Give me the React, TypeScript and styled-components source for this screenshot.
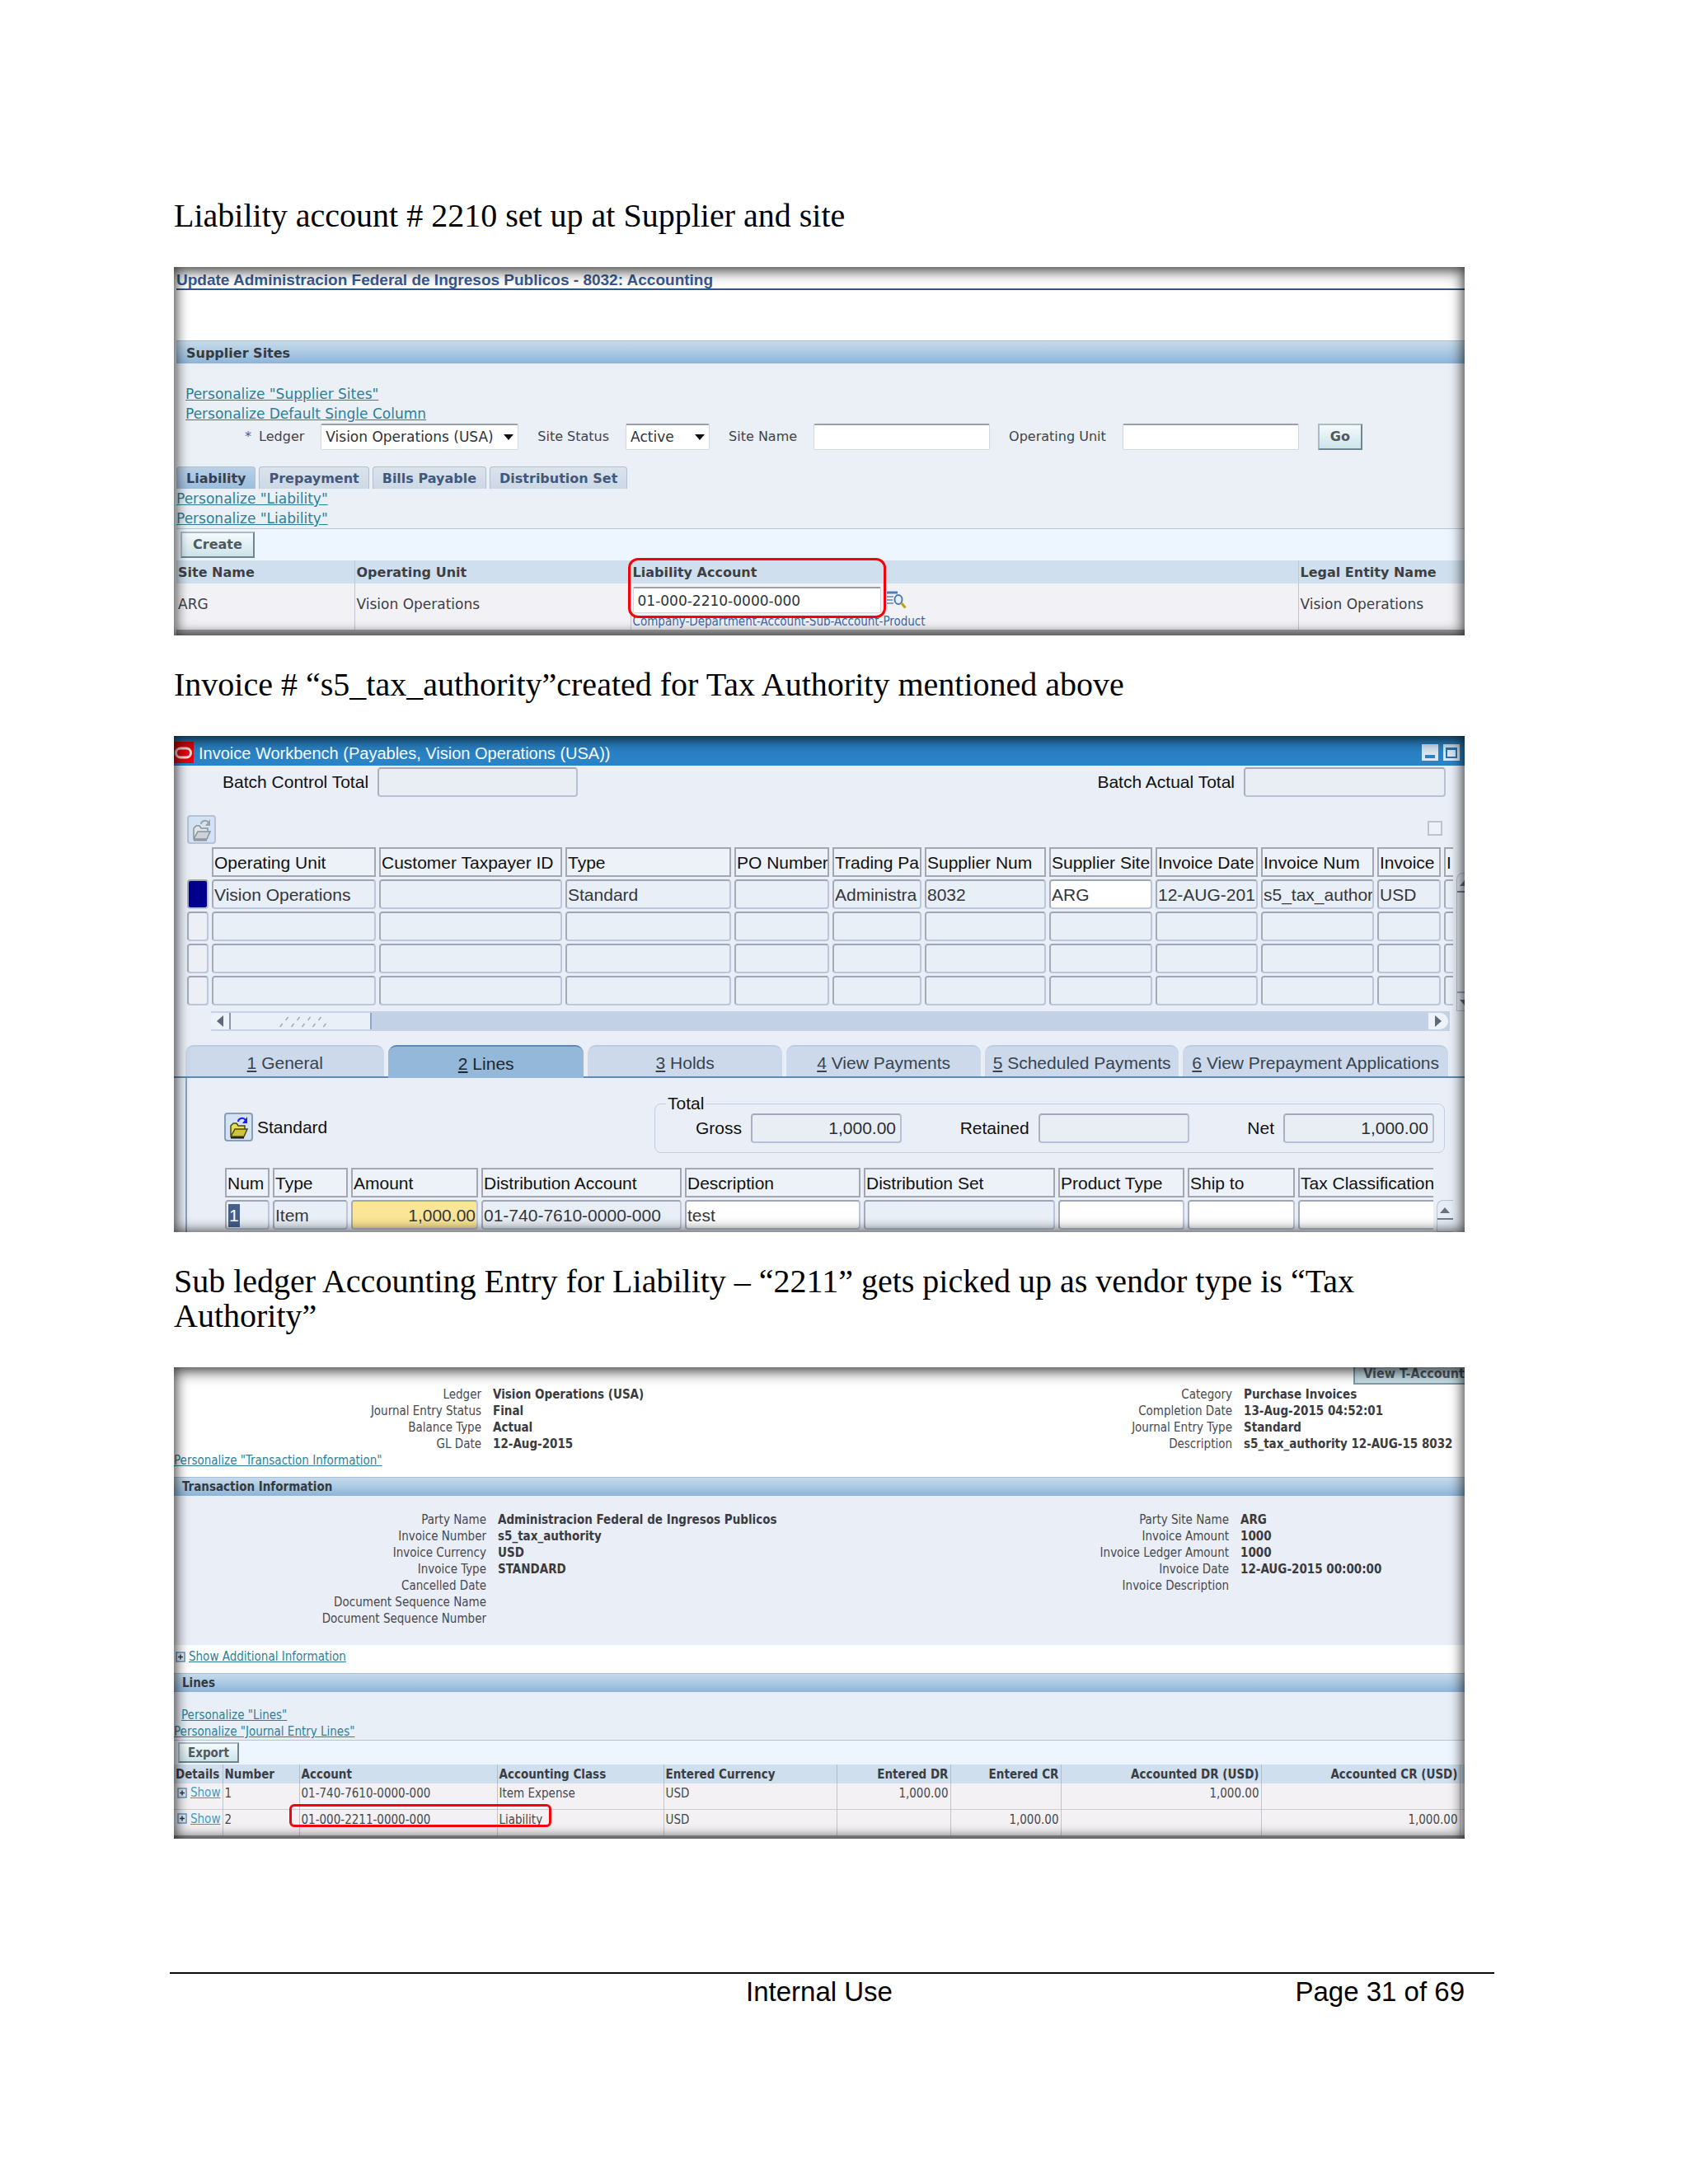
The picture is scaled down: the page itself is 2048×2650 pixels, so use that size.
import React from "react";
import styled, { createGlobalStyle, css } from "styled-components";

const GlobalStyle = createGlobalStyle`
  *, *::before, *::after { box-sizing: border-box; }
  body { margin: 0; background: #ffffff; }
`;

const tahoma = `"DejaVu Sans", Verdana, sans-serif`;
const tahomaNarrow = `"DejaVu Sans Condensed", Tahoma, "DejaVu Sans", sans-serif`;
const arial = `"Liberation Sans", Arial, sans-serif`;

/* ---------- document sheet ---------- */

const Sheet = styled.main`
  padding: 241px 271px 190px 211px;
`;

const Caption = styled.h2`
  margin: 0 0 41px;
  font: 400 40px/42px "Liberation Serif", Georgia, serif;
  color: #000;
`;

const Figure = styled.section<{ $indent?: number }>`
  position: relative;
  overflow: hidden;
  margin-bottom: 39px;
  padding-left: ${(p) => p.$indent ?? 0}px;
  background: #fff;
  &::after {
    content: "";
    position: absolute;
    inset: 0;
    z-index: 5;
    pointer-events: none;
    box-shadow: inset 0 5px 20px -2px rgba(0, 0, 0, 0.55), inset 0 0 16px 1px rgba(0, 0, 0, 0.6);
  }
`;

const FooterBar = styled.footer`
  display: grid;
  grid-template-columns: 1fr auto 1fr;
  margin: 162px -36px 0 -5px;
  padding: 3px 36px 0 5px;
  border-top: 2px solid #0a0a0a;
  font: 33px/38px ${arial};
  color: #000;
`;

const FooterMiddle = styled.span`
  grid-column: 2;
`;

const PageNumber = styled.span`
  text-align: right;
`;

/* ---------- shared web-page parts ---------- */

const SectionBar = styled.h3<{ $small?: boolean }>`
  margin: 0;
  border-top: 1px solid #a9bfd3;
  background: linear-gradient(#c6daeb, #abc9e2 50%, #8db4da);
  color: #333a42;
  ${(p) =>
    p.$small
      ? css`
          padding: 0 10px;
          font: 700 15px/22px ${tahomaNarrow};
        `
      : css`
          padding: 3px 12px 0;
          font: 700 16px/24px ${tahoma};
        `}
`;

const Link = styled.a<{ $small?: boolean }>`
  color: #2d7f97;
  text-decoration: underline;
  font: ${(p) => (p.$small ? `15px/20px ${tahomaNarrow}` : `17px/24px ${tahoma}`)};
`;

const LinkStack = styled.div<{ $left?: number }>`
  display: flex;
  flex-direction: column;
  align-items: flex-start;
  padding-left: ${(p) => p.$left ?? 0}px;
`;

const PushButton = styled.button<{ $small?: boolean }>`
  height: ${(p) => (p.$small ? 25 : 32)}px;
  padding: 0 ${(p) => (p.$small ? 10 : 13)}px;
  border: 2px solid;
  border-color: #a9bcc6 #6f858f #6f858f #a9bcc6;
  background: linear-gradient(#f4fafc, #cde4ea);
  color: #4f5961;
  font: ${(p) => (p.$small ? `700 15px/20px ${tahomaNarrow}` : `700 16px/24px ${tahoma}`)};
`;

const Toolbar = styled.div<{ $small?: boolean }>`
  display: flex;
  padding: ${(p) => (p.$small ? "2px 5px" : "3px 5px")};
  border-top: 1px solid #bac3d0;
  background: #edf5fe;
`;

const BottomEdge = styled.div<{ $h: number }>`
  height: ${(p) => p.$h}px;
  background: #a9a9ac;
`;

const Highlight = styled.span<{ $x: number; $y: number; $w: number; $h: number }>`
  position: absolute;
  z-index: 6;
  left: ${(p) => p.$x}px;
  top: ${(p) => p.$y}px;
  width: ${(p) => p.$w}px;
  height: ${(p) => p.$h}px;
  border: 3px solid #f3040c;
  border-radius: ${(p) => (p.$h > 40 ? 12 : 6)}px;
  pointer-events: none;
`;

const Col = styled.col<{ $w: number }>`
  width: ${(p) => p.$w}px;
`;

/* ---------- figure 1: supplier accounting ---------- */

const PageTitle = styled.h3`
  margin: 0 0 61px;
  padding-top: 6px;
  border-bottom: 2px solid #2b5a8c;
  font: 700 19px/20px ${arial};
  color: #39598f;
`;

const SitesBody = styled.div`
  padding-top: 25px;
  background: #ebeff6;
`;

const SearchRow = styled.form`
  display: flex;
  align-items: center;
  gap: 23px;
  height: 31px;
  padding-left: 83px;
`;

const Field = styled.div`
  display: flex;
  align-items: center;
  gap: 20px;
  color: #3d444b;
  font: 16px/24px ${tahoma};
`;

const Star = styled.span`
  margin-right: 4px;
  color: #3c66a8;
`;

const SelectBox = styled.span<{ $w: number }>`
  position: relative;
  width: ${(p) => p.$w}px;
  &::after {
    content: "";
    position: absolute;
    right: 6px;
    top: 13px;
    border: 6px solid transparent;
    border-top: 7px solid #111;
    border-bottom: 0;
    pointer-events: none;
  }
`;

const boxed = css`
  height: 32px;
  border: 1px solid #d3d7de;
  border-top: 2px solid #9b9fa6;
  border-radius: 2px;
  background: #fff;
  color: #2e3338;
  font: 17px/24px ${tahoma};
`;

const Select = styled.select`
  ${boxed}
  display: block;
  appearance: none;
  width: 100%;
  padding: 0 5px;
`;

const TextInput = styled.input<{ $w: number }>`
  ${boxed}
  width: ${(p) => p.$w}px;
  padding: 0 5px;
`;

const SiteTabs = styled.div`
  display: flex;
  gap: 4px;
  margin-top: 21px;
`;

const SiteTab = styled.button<{ $on?: boolean }>`
  height: 27px;
  padding: 2px 11px 0;
  border: 1px solid #b3bfce;
  border-bottom: 0;
  border-radius: 4px 4px 0 0;
  background: ${(p) => (p.$on ? "linear-gradient(#b9d0e8, #9dbcdd)" : "linear-gradient(#dbe3ec, #cdd8e6)")};
  color: ${(p) => (p.$on ? "#34414f" : "#42587a")};
  font: 700 16px/24px ${tahoma};
`;

const SiteTable = styled.table`
  width: 100%;
  table-layout: fixed;
  border-collapse: collapse;
  color: #3d3f45;
  th {
    position: relative;
    height: 28px;
    padding: 2px 2px 0;
    background: #cfdfee;
    border-left: 1px solid #bccbdb;
    text-align: left;
    font: 700 16px/26px ${tahoma};
  }
  td {
    height: 56px;
    padding: 0 2px;
    vertical-align: top;
    background: #f2f1f5;
    border-left: 1px solid #c3c6cf;
    font: 17px/50px ${tahoma};
  }
  th:first-child,
  td:first-child {
    border-left: 0;
  }
`;

const AccountLine = styled.div`
  display: flex;
  align-items: center;
  gap: 7px;
  padding-top: 4px;
`;

const Hint = styled.div`
  font: 15px/20px ${tahomaNarrow};
  color: #3a68ad;
`;

function SearchIcon() {
  return (
    <svg width="24" height="22" viewBox="0 0 24 22" fill="none" aria-hidden="true">
      <path d="M0 2h13" stroke="#4f7cbf" strokeWidth="3" />
      <path d="M0 7h8M0 11h7M0 15h8" stroke="#5c86c2" strokeWidth="1.6" />
      <ellipse cx="14" cy="10.500" rx="4.500" ry="5.500" stroke="#4a78b8" strokeWidth="2" fill="#e6f1fb" />
      <path d="M17.500 14.500l5 6" stroke="#b8a51c" strokeWidth="3" />
    </svg>
  );
}

function SupplierFigure() {
  return (
    <Figure $indent={3}>
      <PageTitle>Update Administracion Federal de Ingresos Publicos - 8032: Accounting</PageTitle>
      <SectionBar>Supplier Sites</SectionBar>
      <SitesBody>
        <LinkStack $left={11}>
          <Link href="#sites">Personalize "Supplier Sites"</Link>
          <Link href="#column">Personalize Default Single Column</Link>
        </LinkStack>
        <SearchRow onSubmit={(e) => e.preventDefault()}>
          <Field>
            <label htmlFor="ledger">
              <Star>*</Star> Ledger
            </label>
            <SelectBox $w={240}>
              <Select id="ledger">
                <option>Vision Operations (USA)</option>
              </Select>
            </SelectBox>
          </Field>
          <Field>
            <label htmlFor="status">Site Status</label>
            <SelectBox $w={102}>
              <Select id="status">
                <option>Active</option>
              </Select>
            </SelectBox>
          </Field>
          <Field>
            <label htmlFor="site">Site Name</label>
            <TextInput id="site" $w={214} />
          </Field>
          <Field>
            <label htmlFor="unit">Operating Unit</label>
            <TextInput id="unit" $w={214} />
          </Field>
          <PushButton>Go</PushButton>
        </SearchRow>
        <SiteTabs role="tablist">
          <SiteTab role="tab" $on>Liability</SiteTab>
          <SiteTab role="tab">Prepayment</SiteTab>
          <SiteTab role="tab">Bills Payable</SiteTab>
          <SiteTab role="tab">Distribution Set</SiteTab>
        </SiteTabs>
        <LinkStack>
          <Link href="#liability">Personalize "Liability"</Link>
          <Link href="#liability-table">Personalize "Liability"</Link>
        </LinkStack>
      </SitesBody>
      <Toolbar>
        <PushButton>Create</PushButton>
      </Toolbar>
      <SiteTable>
        <colgroup>
          <Col $w={216} />
          <Col $w={335} />
          <Col $w={810} />
          <Col $w={202} />
        </colgroup>
        <thead>
          <tr>
            <th>Site Name</th>
            <th>Operating Unit</th>
            <th>
              Liability Account
              <Highlight $x={-4} $y={-3} $w={313} $h={73} />
            </th>
            <th>Legal Entity Name</th>
          </tr>
        </thead>
        <tbody>
          <tr>
            <td>ARG</td>
            <td>Vision Operations</td>
            <td>
              <AccountLine>
                <TextInput $w={301} defaultValue="01-000-2210-0000-000" aria-label="Liability Account" />
                <SearchIcon />
              </AccountLine>
              <Hint>Company-Department-Account-Sub-Account-Product</Hint>
            </td>
            <td>Vision Operations</td>
          </tr>
        </tbody>
      </SiteTable>
      <BottomEdge $h={7} />
    </Figure>
  );
}

/* ---------- figure 2: invoice workbench ---------- */

const Workbench = styled(Figure)`
  background: #eaeff7;
  font: 21px/24px ${arial};
  color: #111;
`;

const WindowBar = styled.div`
  display: flex;
  align-items: center;
  gap: 6px;
  height: 36px;
  padding: 6px 6px 2px 0;
  background: #2a83c6;
  color: #fff;
`;

const WindowTitle = styled.span`
  flex: 1;
  padding-top: 2px;
  font-size: 20px;
`;

const WindowButton = styled.button`
  display: flex;
  padding: 0;
  border: 0;
  background: none;
`;

const BatchRow = styled.div`
  display: flex;
  justify-content: space-between;
  padding: 2px 23px 0 59px;
`;

const FormLabel = styled.label`
  display: flex;
  align-items: center;
  gap: 11px;
`;

const FormInput = styled.input<{ $w: number }>`
  width: ${(p) => p.$w}px;
  height: 36px;
  padding: 0 5px;
  border: 2px solid #b7c1d6;
  border-top-color: #a3a9b8;
  border-left-color: #a9b0c0;
  border-radius: 4px;
  background: #e9eef5;
  color: #2b2e33;
  text-align: right;
  font: 21px/24px ${arial};
`;

const IconRow = styled.div`
  display: flex;
  justify-content: space-between;
  padding: 22px 27px 0 16px;
`;

const IconButton = styled.button<{ $strong?: boolean }>`
  display: flex;
  align-items: center;
  justify-content: center;
  width: 35px;
  height: 35px;
  padding: 0;
  border: 2px solid ${(p) => (p.$strong ? "#8a9ebb" : "#b4c3da")};
  border-radius: 4px;
  background: #d3e3f3;
`;

const TickBox = styled.input`
  appearance: none;
  width: 18px;
  height: 18px;
  margin: 7px 0 0;
  border: 2px solid #bcc4d0;
  background: #eef1f7;
`;

const GridRow = styled.div<{ $l: number; $r: number; $top?: number }>`
  display: flex;
  align-items: flex-start;
  margin: ${(p) => p.$top ?? 0}px ${(p) => p.$r}px 0 ${(p) => p.$l}px;
`;

const FormTable = styled.table`
  flex: 1;
  width: 0;
  table-layout: fixed;
  border-collapse: separate;
  border-spacing: 4px 3px;
  font: 21px/31px ${arial};
  th,
  td {
    height: 36px;
    overflow: hidden;
    white-space: nowrap;
    text-align: left;
  }
  th {
    padding: 1px 1px 0;
    border: 2px solid #a2a7b1;
    background: #edf1f8;
    color: #111;
    font-weight: 400;
  }
  td {
    padding: 0 1px;
    border: 2px solid #bcc6dc;
    border-top-color: #9fa5b3;
    border-left-color: #a5abb9;
    border-radius: 4px;
    background: #e9eff6;
    color: #34373c;
  }
  th:last-child,
  td:last-child {
    border-right: 0;
    border-top-right-radius: 0;
    border-bottom-right-radius: 0;
  }
`;

const BlankHead = styled.td`
  && {
    border: 0;
    background: none;
  }
`;

const FormCell = styled.td<{ $fill?: string; $right?: boolean }>`
  && {
    ${(p) => p.$fill && `background: ${p.$fill};`}
    ${(p) => p.$right && `text-align: right;`}
  }
`;

const Selected = styled.span`
  display: inline-block;
  height: 28px;
  padding: 0 1px;
  margin-left: 1px;
  background: #45608f;
  color: #fff;
  line-height: 28px;
`;

const VScroll = styled.div<{ $w: number; $top: number; $h: number }>`
  flex: none;
  display: flex;
  flex-direction: column;
  justify-content: space-between;
  overflow: hidden;
  width: ${(p) => p.$w}px;
  height: ${(p) => p.$h}px;
  margin-top: ${(p) => p.$top}px;
  border: 1px solid #b9c2d2;
  border-right: 0;
  border-radius: 8px 0 0 0;
  background: #e6edf6;
`;

const ArrowUp = styled.span`
  height: 23px;
  border-bottom: 2px solid #76808f;
  &::before {
    content: "";
    display: block;
    width: 0;
    margin: 8px 0 0 3px;
    border: 6px solid transparent;
    border-top: 0;
    border-bottom: 7px solid #6a7280;
  }
`;

const ArrowDown = styled.span`
  height: 23px;
  border-top: 2px solid #9aa8c0;
  &::before {
    content: "";
    display: block;
    width: 0;
    margin: 8px 0 0 3px;
    border: 6px solid transparent;
    border-bottom: 0;
    border-top: 7px solid #6a7280;
  }
`;

const HScroll = styled.div`
  display: flex;
  justify-content: space-between;
  height: 24px;
  margin: 0 18px 0 45px;
  border: 2px solid #c6d2e6;
  border-left-width: 0;
  background: #c2d1e6;
`;

const ScrollThumb = styled.div`
  display: flex;
  width: 195px;
  border-right: 2px solid #8fa8c8;
  background: #e9f0f7;
`;

const ScrollArrow = styled.button<{ $side: "left" | "right" }>`
  display: flex;
  align-items: center;
  justify-content: center;
  width: 24px;
  padding: 0;
  border: 0;
  border-right: ${(p) => (p.$side === "left" ? "2px solid #8d97a6" : "0")};
  border-radius: ${(p) => (p.$side === "left" ? "10px 0 0 10px" : "0 10px 10px 0")};
  background: #eef3f9;
`;

const FormTabs = styled.div`
  display: grid;
  grid-template-columns: 241fr 236fr 236fr 235fr 235fr 321fr;
  gap: 5px;
  margin-top: 17px;
  padding: 0 20px 0 14px;
  border-bottom: 2px solid #6189b3;
`;

const FormTab = styled.button<{ $on?: boolean }>`
  height: ${(p) => (p.$on ? 40 : 38)}px;
  margin-bottom: ${(p) => (p.$on ? -2 : 0)}px;
  padding: 4px 0 0;
  border: 0;
  border-top: 2px solid ${(p) => (p.$on ? "#5f88b4" : "#bccbdf")};
  border-radius: 10px 10px 0 0;
  background: ${(p) => (p.$on ? "#93b8da" : "#cbd9ea")};
  color: ${(p) => (p.$on ? "#1c2630" : "#39444f")};
  font: 21px/24px ${arial};
  white-space: nowrap;
`;

const TabBody = styled.div`
  margin-left: 14px;
  border-left: 2px solid #8ba3c3;
`;

const TotalsRow = styled.div`
  display: flex;
  justify-content: space-between;
  align-items: flex-start;
  padding: 19px 24px 15px 45px;
`;

const LineType = styled.div`
  display: flex;
  align-items: center;
  gap: 5px;
  padding-top: 23px;
`;

const Totals = styled.fieldset`
  width: 959px;
  margin: 0;
  padding: 0 12px 11px 49px;
  border: 1px solid #c3cfe0;
  border-radius: 8px;
  legend {
    margin-left: -36px;
    padding: 0 2px;
    line-height: 24px;
  }
`;

const TotalsFields = styled.div`
  display: flex;
  justify-content: space-between;
`;

function OracleMark() {
  return (
    <svg width="24" height="26" viewBox="0 0 24 26" aria-hidden="true">
      <rect width="24" height="26" fill="#e0060f" />
      <rect x="2.500" y="8" width="18" height="11" rx="5.500" fill="none" stroke="#f7d7d4" strokeWidth="3" />
    </svg>
  );
}

function FolderIcon({ color }: { color?: boolean }) {
  const line = color ? "#4c4a12" : "#8c9299";
  return (
    <svg width="24" height="28" viewBox="0 0 24 28" fill="none" aria-hidden="true">
      <path d="M2 24V12l3-3h4l2 3h8v4" fill={color ? "#e6dd55" : "#dfe4e8"} stroke={line} strokeWidth="1.500" />
      <path d="M2 25l5-9h15l-4 9z" fill={color ? "#cfc43e" : "#cdd3d8"} stroke={line} strokeWidth="1.500" />
      <path d="M2 26.500h16" stroke={color ? "#111" : "#8c9299"} strokeWidth="2" />
      <path d="M11 7c0-4 6-6 9-2" stroke={color ? "#1a22e0" : "#9aa1a8"} strokeWidth="2" />
      <path d="M22 1v8h-6z" fill={color ? "#1a22e0" : "#9aa1a8"} />
    </svg>
  );
}

function Grip() {
  return (
    <svg width="170" height="20" viewBox="0 0 170 20" stroke="#a3acb8" strokeWidth="1.500" aria-hidden="true">
      <path d="M67 9l3-4M81 9l3-4M94 9l3-4M107 9l3-4M60 17l3-4M74 17l3-4M87 17l3-4M100 17l3-4M113 17l3-4" />
    </svg>
  );
}

const invoiceCols: [string, number, string, string?][] = [
  ["Operating Unit", 199, "Vision Operations"],
  ["Customer Taxpayer ID", 222, ""],
  ["Type", 201, "Standard"],
  ["PO Number", 115, ""],
  ["Trading Pa", 108, "Administra"],
  ["Supplier Num", 147, "8032"],
  ["Supplier Site", 125, "ARG", "#ffffff"],
  ["Invoice Date", 124, "12-AUG-2015"],
  ["Invoice Num", 137, "s5_tax_author"],
  ["Invoice", 77, "USD"],
  ["I", 11, ""],
];

const lineCols: [string, number][] = [
  ["Num", 54],
  ["Type", 91],
  ["Amount", 154],
  ["Distribution Account", 243],
  ["Description", 213],
  ["Distribution Set", 232],
  ["Product Type", 153],
  ["Ship to", 130],
  ["Tax Classification", 164],
];

const tabs = [
  "General",
  "Lines",
  "Holds",
  "View Payments",
  "Scheduled Payments",
  "View Prepayment Applications",
];

function WorkbenchFigure() {
  return (
    <Workbench>
      <WindowBar>
        <OracleMark />
        <WindowTitle>Invoice Workbench (Payables, Vision Operations (USA))</WindowTitle>
        <WindowButton aria-label="Minimize">
          <svg width="20" height="20" aria-hidden="true">
            <rect width="20" height="20" fill="#d9e8f4" />
            <rect x="4" y="13" width="12" height="4" fill="#2a83c6" />
          </svg>
        </WindowButton>
        <WindowButton aria-label="Maximize">
          <svg width="20" height="20" aria-hidden="true">
            <rect width="20" height="20" fill="#d9e8f4" />
            <rect x="4" y="5" width="12" height="11" fill="none" stroke="#2a74b0" strokeWidth="2" />
            <rect x="3" y="4" width="14" height="3" fill="#2a74b0" />
          </svg>
        </WindowButton>
      </WindowBar>
      <BatchRow>
        <FormLabel>
          Batch Control Total
          <FormInput $w={243} />
        </FormLabel>
        <FormLabel>
          Batch Actual Total
          <FormInput $w={245} />
        </FormLabel>
      </BatchRow>
      <IconRow>
        <IconButton aria-label="Open folder">
          <FolderIcon />
        </IconButton>
        <TickBox type="checkbox" aria-label="Select all" />
      </IconRow>
      <GridRow $l={12} $r={0} $top={1}>
        <FormTable>
          <colgroup>
            <Col $w={26} />
            {invoiceCols.map(([name, w]) => (
              <Col key={name} $w={w} />
            ))}
          </colgroup>
          <thead>
            <tr>
              <BlankHead />
              {invoiceCols.map(([name]) => (
                <th key={name}>{name}</th>
              ))}
            </tr>
          </thead>
          <tbody>
            {[0, 1, 2, 3].map((row) => (
              <tr key={row}>
                <FormCell $fill={row === 0 ? "#00008c" : "#eceff6"} />
                {invoiceCols.map(([name, , value, fill]) => (
                  <FormCell key={name} $fill={row === 0 ? fill : undefined}>
                    {row === 0 ? value : ""}
                  </FormCell>
                ))}
              </tr>
            ))}
          </tbody>
        </FormTable>
        <VScroll $w={13} $top={34} $h={168}>
          <ArrowUp />
          <ArrowDown />
        </VScroll>
      </GridRow>
      <HScroll>
        <ScrollThumb>
          <ScrollArrow $side="left" aria-label="Scroll left">
            <svg width="8" height="14" aria-hidden="true">
              <path d="M8 0v14L0 7z" fill="#5f6977" />
            </svg>
          </ScrollArrow>
          <Grip />
        </ScrollThumb>
        <ScrollArrow $side="right" aria-label="Scroll right">
          <svg width="8" height="14" aria-hidden="true">
            <path d="M0 0v14l8-7z" fill="#5f6977" />
          </svg>
        </ScrollArrow>
      </HScroll>
      <FormTabs role="tablist">
        {tabs.map((name, i) => (
          <FormTab key={name} role="tab" $on={i === 1}>
            <u>{i + 1}</u> {name}
          </FormTab>
        ))}
      </FormTabs>
      <TabBody>
        <TotalsRow>
          <LineType>
            <IconButton $strong aria-label="Open lines folder">
              <FolderIcon color />
            </IconButton>
            Standard
          </LineType>
          <Totals>
            <legend>Total</legend>
            <TotalsFields>
              <FormLabel>
                Gross
                <FormInput $w={183} defaultValue="1,000.00" />
              </FormLabel>
              <FormLabel>
                Retained
                <FormInput $w={183} />
              </FormLabel>
              <FormLabel>
                Net
                <FormInput $w={183} defaultValue="1,000.00" />
              </FormLabel>
            </TotalsFields>
          </Totals>
        </TotalsRow>
        <GridRow $l={42} $r={16}>
          <FormTable>
            <colgroup>
              {lineCols.map(([name, w]) => (
                <Col key={name} $w={w} />
              ))}
            </colgroup>
            <thead>
              <tr>
                {lineCols.map(([name]) => (
                  <th key={name}>{name}</th>
                ))}
              </tr>
            </thead>
            <tbody>
              <tr>
                <FormCell>
                  <Selected>1</Selected>
                </FormCell>
                <FormCell>Item</FormCell>
                <FormCell $fill="#fbe596" $right>1,000.00</FormCell>
                <FormCell>01-740-7610-0000-000</FormCell>
                <FormCell $fill="#fff">test</FormCell>
                <FormCell />
                <FormCell $fill="#fff" />
                <FormCell $fill="#fff" />
                <FormCell $fill="#fff" />
              </tr>
            </tbody>
          </FormTable>
          <VScroll $w={20} $top={42} $h={39}>
            <ArrowUp />
          </VScroll>
        </GridRow>
      </TabBody>
    </Workbench>
  );
}

/* ---------- figure 3: journal entry ---------- */

const TopButtonRow = styled.div`
  display: flex;
  justify-content: flex-end;
  height: 21px;
`;

const TopButton = styled.button`
  height: 21px;
  padding: 0 0 4px 10px;
  border: 2px solid #7f9aa6;
  border-width: 0 0 2px 2px;
  background: #c6dde4;
  color: #4f5961;
  font: 700 16px/15px ${tahomaNarrow};
`;

const Facts = styled.div<{ $top: number; $bottom: number; $tint?: boolean }>`
  display: grid;
  grid-template-columns: 1fr 1fr;
  align-items: start;
  padding: ${(p) => p.$top}px 0 ${(p) => p.$bottom}px;
  background: ${(p) => (p.$tint ? "#eaeef6" : "#fff")};
`;

const FactList = styled.dl<{ $label: number }>`
  display: grid;
  grid-template-columns: ${(p) => p.$label}px 1fr;
  column-gap: 14px;
  grid-auto-rows: 20px;
  margin: 0;
  color: #47494f;
  font: 15px/20px ${tahomaNarrow};
  white-space: nowrap;
  dt {
    text-align: right;
  }
  dd {
    margin: 0;
    font-weight: 700;
    color: #3a3b40;
  }
`;

const MoreRow = styled.div`
  display: flex;
  align-items: center;
  gap: 4px;
  padding: 4px 2px 10px;
`;

const LinesBody = styled.div`
  padding-top: 18px;
  background: #e9eff7;
`;

const LinesTable = styled.table`
  width: 100%;
  table-layout: fixed;
  border-collapse: collapse;
  color: #47484e;
  th {
    height: 23px;
    padding: 1px 2px 0;
    background: #cfdfee;
    border-right: 1px solid #aebccb;
    text-align: left;
    color: #3a3d43;
    font: 700 15px/22px ${tahomaNarrow};
    white-space: nowrap;
  }
  td {
    position: relative;
    height: 31px;
    padding: 1px 2px 0;
    vertical-align: top;
    background: #f3f1f4;
    border-right: 1px solid #c2c4cc;
    font: 15px/22px ${tahomaNarrow};
    white-space: nowrap;
  }
  tr + tr td {
    height: 32px;
    border-top: 1px solid #c9ccd3;
  }
`;

const Num = styled.td`
  text-align: right;
`;

const NumHead = styled.th`
  && {
    text-align: right;
  }
`;

const ShowCell = styled.div`
  display: flex;
  align-items: center;
  gap: 4px;
  padding-left: 2px;
`;

const ShowLink = styled(Link)`
  color: #3d9cc6;
`;

const Spacer = styled.div`
  height: 10px;
`;

function PlusIcon() {
  return (
    <svg width="12" height="13" viewBox="0 0 12 13" fill="none" aria-hidden="true">
      <rect x="1" y="1" width="10" height="11" fill="#e3eef8" stroke="#6c95b8" strokeWidth="1.500" />
      <path d="M3 6.500h6M6 3.500v6" stroke="#2b3a4c" strokeWidth="1.500" />
    </svg>
  );
}

function FactColumn({ label, rows }: { label: number; rows: [string, string][] }) {
  return (
    <FactList $label={label}>
      {rows.map(([name, value]) => (
        <React.Fragment key={name}>
          <dt>{name}</dt>
          <dd>{value}</dd>
        </React.Fragment>
      ))}
    </FactList>
  );
}

function JournalFigure() {
  return (
    <Figure>
      <TopButtonRow>
        <TopButton>View T-Account</TopButton>
      </TopButtonRow>
      <Facts $top={2} $bottom={0}>
        <FactColumn
          label={373}
          rows={[
            ["Ledger", "Vision Operations (USA)"],
            ["Journal Entry Status", "Final"],
            ["Balance Type", "Actual"],
            ["GL Date", "12-Aug-2015"],
          ]}
        />
        <FactColumn
          label={501}
          rows={[
            ["Category", "Purchase Invoices"],
            ["Completion Date", "13-Aug-2015 04:52:01"],
            ["Journal Entry Type", "Standard"],
            ["Description", "s5_tax_authority 12-AUG-15 8032"],
          ]}
        />
      </Facts>
      <LinkStack>
        <Link $small href="#transaction">Personalize "Transaction Information"</Link>
      </LinkStack>
      <Spacer />
      <SectionBar $small>Transaction Information</SectionBar>
      <Facts $top={19} $bottom={22} $tint>
        <FactColumn
          label={379}
          rows={[
            ["Party Name", "Administracion Federal de Ingresos Publicos"],
            ["Invoice Number", "s5_tax_authority"],
            ["Invoice Currency", "USD"],
            ["Invoice Type", "STANDARD"],
            ["Cancelled Date", ""],
            ["Document Sequence Name", ""],
            ["Document Sequence Number", ""],
          ]}
        />
        <FactColumn
          label={497}
          rows={[
            ["Party Site Name", "ARG"],
            ["Invoice Amount", "1000"],
            ["Invoice Ledger Amount", "1000"],
            ["Invoice Date", "12-AUG-2015 00:00:00"],
            ["Invoice Description", ""],
          ]}
        />
      </Facts>
      <MoreRow>
        <PlusIcon />
        <Link $small href="#more">Show Additional Information</Link>
      </MoreRow>
      <SectionBar $small>Lines</SectionBar>
      <LinesBody>
        <LinkStack $left={9}>
          <Link $small href="#lines">Personalize "Lines"</Link>
        </LinkStack>
        <LinkStack>
          <Link $small href="#journal">Personalize "Journal Entry Lines"</Link>
        </LinkStack>
      </LinesBody>
      <Toolbar $small>
        <PushButton $small>Export</PushButton>
      </Toolbar>
      <LinesTable>
        <colgroup>
          {[59, 93, 240, 202, 210, 138, 134, 243, 241, 6].map((w) => (
            <Col key={w} $w={w} />
          ))}
        </colgroup>
        <thead>
          <tr>
            <th>Details</th>
            <th>Number</th>
            <th>Account</th>
            <th>Accounting Class</th>
            <th>Entered Currency</th>
            <NumHead>Entered DR</NumHead>
            <NumHead>Entered CR</NumHead>
            <NumHead>Accounted DR (USD)</NumHead>
            <NumHead>Accounted CR (USD)</NumHead>
            <th />
          </tr>
        </thead>
        <tbody>
          <tr>
            <td>
              <ShowCell>
                <PlusIcon />
                <ShowLink $small href="#line1">Show</ShowLink>
              </ShowCell>
            </td>
            <td>1</td>
            <td>01-740-7610-0000-000</td>
            <td>Item Expense</td>
            <td>USD</td>
            <Num>1,000.00</Num>
            <Num />
            <Num>1,000.00</Num>
            <Num />
            <td />
          </tr>
          <tr>
            <td>
              <ShowCell>
                <PlusIcon />
                <ShowLink $small href="#line2">Show</ShowLink>
              </ShowCell>
            </td>
            <td>2</td>
            <td>
              01-000-2211-0000-000
              <Highlight $x={-13} $y={-7} $w={318} $h={28} />
            </td>
            <td>Liability</td>
            <td>USD</td>
            <Num />
            <Num>1,000.00</Num>
            <Num />
            <Num>1,000.00</Num>
            <td />
          </tr>
        </tbody>
      </LinesTable>
      <BottomEdge $h={4} />
    </Figure>
  );
}

export default function App() {
  return (
    <>
      <GlobalStyle />
      <Sheet>
        <Caption>Liability account # 2210 set up at Supplier and site</Caption>
        <SupplierFigure />
        <Caption>Invoice # “s5_tax_authority”created for Tax Authority mentioned above</Caption>
        <WorkbenchFigure />
        <Caption>
          Sub ledger Accounting Entry for Liability – “2211” gets picked up as vendor type is “Tax
          Authority”
        </Caption>
        <JournalFigure />
        <FooterBar>
          <FooterMiddle>Internal Use</FooterMiddle>
          <PageNumber>Page 31 of 69</PageNumber>
        </FooterBar>
      </Sheet>
    </>
  );
}
